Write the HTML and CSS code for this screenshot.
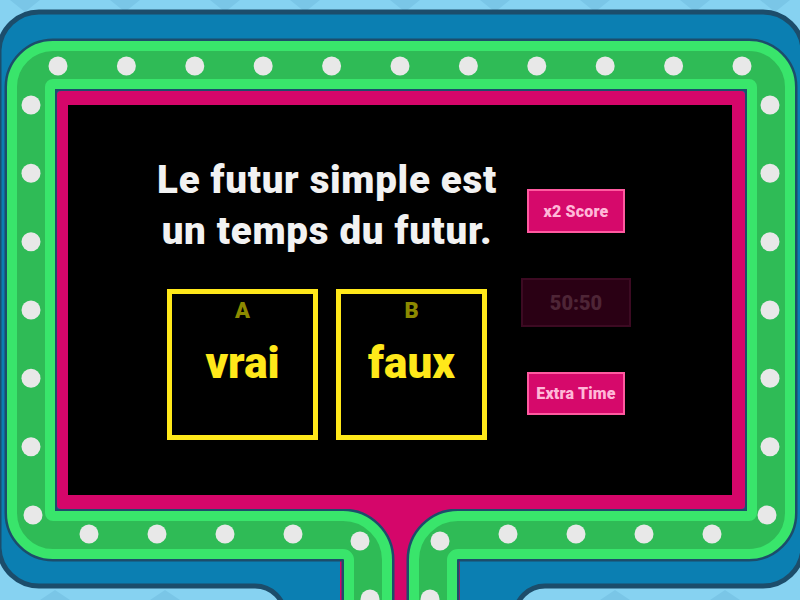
FILE: index.html
```html
<!DOCTYPE html>
<html lang="fr">
<head>
<meta charset="utf-8">
<title>Quiz</title>
<link rel="stylesheet" href="styles.css">
</head>
<body>
<div class="stage">
  <svg class="frame" width="800" height="600" viewBox="0 0 800 600" aria-hidden="true">
    <rect x="0" y="0" width="800" height="600" fill="#86d2f1"/>
    <g fill="#7ac6e7">
      <polygon points="10,0 40,0 25,12"/><polygon points="110,0 140,0 125,12"/><polygon points="210,0 240,0 225,12"/>
      <polygon points="290,0 320,0 305,12"/><polygon points="390,0 420,0 405,12"/><polygon points="480,0 510,0 495,12"/>
      <polygon points="580,0 610,0 595,12"/><polygon points="680,0 710,0 695,12"/><polygon points="760,0 790,0 775,12"/>
      <polygon points="40,600 70,600 55,590"/><polygon points="150,600 180,600 165,590"/><polygon points="600,600 630,600 615,590"/><polygon points="710,600 740,600 725,590"/>
    </g>
    <path d="M -1 50 A 40 40 0 0 1 39 12 L 763 12 A 40 40 0 0 1 803 50 L 803 548 A 40 40 0 0 1 763 586 L 545 586 A 30 30 0 0 0 515 616 L 285 616 A 30 30 0 0 0 255 586 L 39 586 A 40 40 0 0 1 -1 548 Z" fill="#0b7fb2" stroke="#1c4d6b" stroke-width="5"/>
    <rect x="340" y="500" width="120" height="100" fill="#d5066a"/>
    <g fill="none" stroke-linejoin="round">
      <path d="M 368 630 L 368 560 A 25 25 0 0 0 343 535 L 53 535 A 22 22 0 0 1 31 513 L 31 87 A 22 22 0 0 1 53 65 L 749 65 A 22 22 0 0 1 771 87 L 771 513 A 22 22 0 0 1 749 535 L 458 535 A 25 25 0 0 0 433 560 L 433 630" stroke="#1c4d6b" stroke-width="53"/>
      <path d="M 368 630 L 368 560 A 25 25 0 0 0 343 535 L 53 535 A 22 22 0 0 1 31 513 L 31 87 A 22 22 0 0 1 53 65 L 749 65 A 22 22 0 0 1 771 87 L 771 513 A 22 22 0 0 1 749 535 L 458 535 A 25 25 0 0 0 433 560 L 433 630" stroke="#39e56b" stroke-width="48"/>
      <path d="M 368 630 L 368 560 A 25 25 0 0 0 343 535 L 53 535 A 22 22 0 0 1 31 513 L 31 87 A 22 22 0 0 1 53 65 L 749 65 A 22 22 0 0 1 771 87 L 771 513 A 22 22 0 0 1 749 535 L 458 535 A 25 25 0 0 0 433 560 L 433 630" stroke="#2fbb56" stroke-width="28"/>
    </g>
    <g fill="#e8e8e8">
      <circle cx="58" cy="66" r="9.5"/><circle cx="126.4" cy="66" r="9.5"/><circle cx="194.8" cy="66" r="9.5"/><circle cx="263.2" cy="66" r="9.5"/>
      <circle cx="331.6" cy="66" r="9.5"/><circle cx="400" cy="66" r="9.5"/><circle cx="468.4" cy="66" r="9.5"/><circle cx="536.8" cy="66" r="9.5"/>
      <circle cx="605.2" cy="66" r="9.5"/><circle cx="673.6" cy="66" r="9.5"/><circle cx="742" cy="66" r="9.5"/>
      <circle cx="31" cy="105" r="9.5"/><circle cx="31" cy="173.3" r="9.5"/><circle cx="31" cy="241.7" r="9.5"/><circle cx="31" cy="310" r="9.5"/>
      <circle cx="31" cy="378.3" r="9.5"/><circle cx="31" cy="446.7" r="9.5"/><circle cx="33" cy="515" r="9.5"/>
      <circle cx="770" cy="105" r="9.5"/><circle cx="770" cy="173.3" r="9.5"/><circle cx="770" cy="241.7" r="9.5"/><circle cx="770" cy="310" r="9.5"/>
      <circle cx="770" cy="378.3" r="9.5"/><circle cx="770" cy="446.7" r="9.5"/><circle cx="767" cy="515" r="9.5"/>
      <circle cx="89" cy="534" r="9.5"/><circle cx="157" cy="534" r="9.5"/><circle cx="225" cy="534" r="9.5"/><circle cx="293" cy="534" r="9.5"/>
      <circle cx="360" cy="541" r="9.5"/><circle cx="370" cy="599" r="9.5"/>
      <circle cx="712" cy="534" r="9.5"/><circle cx="644" cy="534" r="9.5"/><circle cx="576" cy="534" r="9.5"/><circle cx="508" cy="534" r="9.5"/>
      <circle cx="440" cy="541" r="9.5"/><circle cx="430" cy="599" r="9.5"/>
    </g>
    <rect x="57" y="91" width="688" height="418" rx="4" fill="#d5066a"/>
    <rect x="68" y="105" width="664" height="390" fill="#000"/>
  </svg>

  <main class="screen">
    <section class="quiz">
      <h1 class="question">Le futur simple est<br>un temps du futur.</h1>
      <div class="answers">
        <div class="answer"><span class="letter">A</span><span class="word">vrai</span></div>
        <div class="answer"><span class="letter">B</span><span class="word">faux</span></div>
      </div>
    </section>
    <aside class="powerups">
      <div class="power">x2 Score</div>
      <div class="power disabled">50:50</div>
      <div class="power">Extra Time</div>
    </aside>
  </main>
</div>
</body>
</html>
```
FILE: styles.css
```css
* { box-sizing: border-box; }
html, body { margin: 0; padding: 0; }
body {
  width: 800px;
  height: 600px;
  overflow: hidden;
  background: #86d2f1;
  font-family: Roboto, "Liberation Sans", sans-serif;
}
.stage {
  position: relative;
  width: 800px;
  height: 600px;
  padding: 105px 68px 0 68px;
}
.frame {
  position: absolute;
  left: 0;
  top: 0;
  display: block;
}
.screen {
  position: relative;
  width: 664px;
  height: 390px;
  display: flex;
  padding-left: 80px;
  gap: 10px;
}
.quiz {
  width: 358px;
  display: flex;
  flex-direction: column;
  align-items: center;
  padding-top: 49px;
}
.question {
  margin: 0;
  font-size: 38.5px;
  line-height: 51px;
  font-weight: 900;
  letter-spacing: 0.7px;
  color: #f2f2f2;
  text-align: center;
  white-space: nowrap;
}
.answers {
  display: flex;
  gap: 18px;
  margin-top: 33px;
}
.answer {
  width: 151px;
  height: 151px;
  border: 5px solid #ffe81a;
  display: flex;
  flex-direction: column;
  align-items: center;
  padding-top: 6px;
}
.letter {
  font-size: 22px;
  line-height: 22px;
  font-weight: 900;
  color: #8c8a00;
}
.word {
  margin-top: 19px;
  font-size: 44px;
  line-height: 44px;
  font-weight: 900;
  color: #ffe81a;
}
.powerups {
  width: 120px;
  display: flex;
  flex-direction: column;
  align-items: center;
  padding-top: 84px;
  gap: 45px;
}
.power {
  width: 98px;
  height: 44px;
  display: flex;
  align-items: center;
  justify-content: center;
  background: #d6096b;
  border: 2px solid #ff5aa0;
  color: #ffb8d8;
  font-size: 16px;
  font-weight: 900;
  letter-spacing: 0.2px;
  white-space: nowrap;
}
.power.disabled {
  width: 110px;
  height: 49px;
  background: #2a0014;
  border-color: #3c0a22;
  color: #4e2536;
  font-size: 20px;
  letter-spacing: 0;
}
.power:last-child {
  height: 43px;
}
```
